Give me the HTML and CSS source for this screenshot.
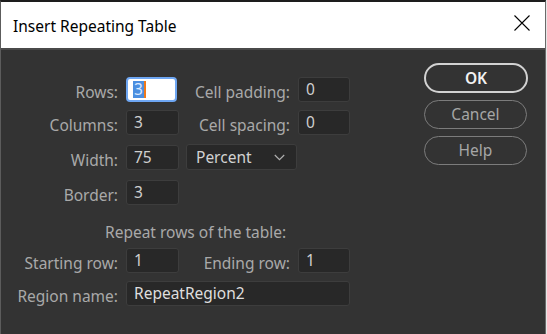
FILE: index.html
```html
<!DOCTYPE html>
<html lang="en">
<head>
    <meta charset="UTF-8">
    <title>Insert Repeating Table</title>
    <link rel="stylesheet" href="styles.css">
</head>
<body>
    <div class="window">
        <div class="titlebar">
            <span class="title">Insert Repeating Table</span>
            <span class="close">
                <svg width="16" height="16" viewBox="0 0 16 16">
                    <path d="M0.5 0.5 L15.5 15.5 M15.5 0.5 L0.5 15.5" stroke="#000" stroke-width="1.1" fill="none"/>
                </svg>
            </span>
        </div>

        <div class="content">
            <div class="table-form">
                <label class="lbl">Rows:</label>
                <div class="field field-active"><span class="sel">3</span><span class="caret"></span></div>
                <label class="lbl">Cell padding:</label>
                <div class="field">0</div>

                <label class="lbl">Columns:</label>
                <div class="field">3</div>
                <label class="lbl">Cell spacing:</label>
                <div class="field">0</div>

                <label class="lbl">Width:</label>
                <div class="field">75</div>
                <div class="select">
                    <span>Percent</span>
                    <svg width="11" height="7" viewBox="0 0 11 7">
                        <path d="M0.8 1 L5.5 5.6 L10.2 1" stroke="#b0b0b0" stroke-width="1.2" fill="none"/>
                    </svg>
                </div>
                <div></div>

                <label class="lbl">Border:</label>
                <div class="field">3</div>
                <div></div>
                <div></div>

                <div class="section-note">Repeat rows of the table:</div>

                <label class="lbl">Starting row:</label>
                <div class="field">1</div>
                <label class="lbl">Ending row:</label>
                <div class="field">1</div>

                <label class="lbl">Region name:</label>
                <div class="field field-wide">RepeatRegion2</div>
            </div>

            <div class="buttons">
                <div class="btn btn-primary">OK</div>
                <div class="btn">Cancel</div>
                <div class="btn">Help</div>
            </div>
        </div>
    </div>
</body>
</html>
```

FILE: styles.css
```css
html, body {
    margin: 0;
    padding: 0;
    background: #e6e6e6;
}

body {
    width: 547px;
    height: 334px;
    overflow: hidden;
}

.window {
    width: 544px;
    height: 332px;
    border-top: 2px solid #1d1d1d;
    border-left: 1px solid #5c5c5c;
    border-right: 1px solid #6a6a6a;
    background: #333333;
    display: flex;
    flex-direction: column;
}

/* barre de titre blanche */
.titlebar {
    height: 46px;
    background: #ffffff;
    border-bottom: 2px solid #4a4a4a;
    display: flex;
    align-items: center;
    padding-left: 12px;
    font-family: "Noto Sans", "Open Sans", sans-serif;
}

.title {
    font-size: 15.5px;
    color: #000;
    margin-top: 2px;
}

.close {
    margin-left: auto;
    margin-right: 15px;
    width: 16px;
    height: 16px;
    margin-top: -4px;
}

.close svg {
    display: block;
}

.content {
    flex: 1;
    display: flex;
    align-items: flex-start;
    padding-top: 13px;
    font-family: "Noto Sans", "Open Sans", sans-serif;
    font-size: 15.5px;
}

.table-form {
    margin-top: 10px;
    display: grid;
    grid-template-columns: 125px 53px 119px 52px;
    grid-template-rows: 33px 33px 36px 35px 34px 33px 33px;
    align-items: center;
}

.lbl {
    text-align: right;
    padding-right: 8px;
    padding-top: 5px;
    color: #a9a9a9;
    white-space: nowrap;
    line-height: 20px;
}

.field {
    height: 23px;
    border: 1px solid #3d3d3d;
    border-radius: 3px;
    background: #282828;
    color: #cfcfcf;
    padding-left: 7px;
    line-height: 23px;
    box-sizing: content-box;
    width: calc(100% - 9px);
}

.field-wide {
    grid-column: 2 / 5;
    color: #dedede;
}

.field-active {
    height: 21px;
    line-height: 21px;
    border: 2px solid #6ea6f2;
    border-radius: 4px;
    background: #ffffff;
    padding-left: 5px;
    width: calc(100% - 11px);
    display: flex;
    align-items: center;
}

.sel {
    background: #4c8fe0;
    color: #dce9ff;
    line-height: 17px;
    padding: 0 1px;
}

.caret {
    width: 2px;
    height: 17px;
    background: #f07a1a;
}

.select {
    margin-left: 7px;
    margin-right: 1px;
    height: 24px;
    border: 1px solid #3d3d3d;
    border-radius: 3px;
    background: #282828;
    color: #d2d2d2;
    display: flex;
    align-items: center;
    padding: 0 11px 0 9px;
}

.select svg {
    margin-left: auto;
}

.section-note {
    grid-column: 1 / -1;
    align-self: end;
    padding-left: 104px;
    margin-bottom: 2px;
    line-height: 20px;
    color: #a9a9a9;
}

.buttons {
    margin-left: auto;
    margin-right: 17px;
    display: flex;
    flex-direction: column;
    gap: 7px;
}

.btn {
    width: 101px;
    height: 27px;
    border: 1.5px solid #7c7c7c;
    border-radius: 15px;
    text-align: center;
    line-height: 26px;
    color: #a6a6a6;
}

.btn-primary {
    border: 2px solid #d2d2d2;
    width: 100px;
    height: 26px;
    color: #f2f2f2;
    font-weight: 600;
}
```
